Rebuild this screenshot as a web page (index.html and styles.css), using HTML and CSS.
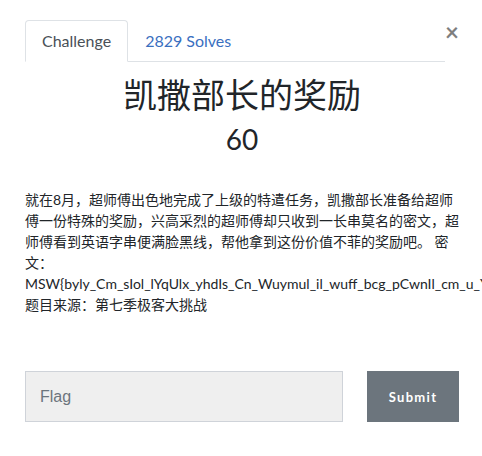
FILE: index.html
```html
<!DOCTYPE html>
<html lang="zh-CN">
<head>
  <meta charset="UTF-8">
  <meta name="viewport" content="width=device-width, initial-scale=1.0">
  <title>凯撒部长的奖励</title>
  <link rel="stylesheet" href="styles.css">
</head>
<body>
  <div class="modal-body">
    <div class="tabs-row">
      <ul class="nav-tabs">
        <li><a class="nav-link active" href="#challenge">Challenge</a></li>
        <li><a class="nav-link" href="#solves">2829 Solves</a></li>
      </ul>
      <button type="button" class="close" aria-label="Close">&times;</button>
    </div>

    <h2 class="challenge-name">凯撒部长的奖励</h2>
    <h3 class="challenge-value">60</h3>

    <p class="challenge-desc">就在8月，超师傅出色地完成了上级的特遣任务，凯撒部长准备给超师傅一份特殊的奖励，兴高采烈的超师傅却只收到一长串莫名的密文，超师傅看到英语字串便满脸黑线，帮他拿到这份价值不菲的奖励吧。 密文：MSW{byly_Cm_sIol_lYqUlx_yhdIs_Cn_Wuymul_il_wuff_bcg_pCwnIl_cm_u_Yrwyh_ypy}<br>题目来源：第七季极客大挑战</p>

    <form class="submit-row" onsubmit="return false;">
      <input type="text" class="flag-input" placeholder="Flag">
      <button type="submit" class="submit-btn">Submit</button>
    </form>
  </div>
</body>
</html>
```

FILE: styles.css
```css
html, body {
  overflow-x: hidden;
}
body {
  margin: 0;
  font-family: Lato, "Noto Sans CJK SC", sans-serif;
  color: #212529;
  background-color: #fff;
}
.modal-body {
  padding: 20px 23px 0 25px;
}
.tabs-row {
  display: flex;
  align-items: flex-start;
}
.nav-tabs {
  flex: 1;
  display: flex;
  list-style: none;
  margin: 0;
  padding: 0;
  border-bottom: 1px solid #dee2e6;
}
.nav-tabs li {
  margin-bottom: -1px;
}
.nav-link {
  display: block;
  padding: 8px 16px;
  font-size: 16px;
  line-height: 24px;
  color: #3a6fbf;
  text-decoration: none;
  border: 1px solid transparent;
  border-top-left-radius: 4px;
  border-top-right-radius: 4px;
}
.nav-link.active {
  color: #495057;
  background-color: #fff;
  border-color: #dee2e6 #dee2e6 #fff;
}
.close {
  width: 14px;
  padding: 0;
  margin: 0;
  border: none;
  background: none;
  font-family: Lato, sans-serif;
  font-size: 24px;
  font-weight: bold;
  line-height: 24px;
  color: #000;
  opacity: 0.5;
  cursor: pointer;
}
.challenge-name {
  margin: 13px 0 0;
  text-align: center;
  font-size: 34px;
  font-weight: normal;
  line-height: 1.2;
}
.challenge-value {
  margin: 7px 0 0;
  text-align: center;
  font-size: 28px;
  font-weight: normal;
  line-height: 1.2;
}
.challenge-desc {
  margin: 33px 0 0;
  font-size: 14px;
  line-height: 21px;
}
.submit-row {
  display: flex;
  gap: 24px;
  margin-top: 56px;
}
.flag-input {
  flex: 1;
  height: 51px;
  padding: 0 14px;
  font-family: "Liberation Sans", Arial, sans-serif;
  font-size: 16px;
  background-color: #efefef;
  border: 1px solid #cfd3d9;
  box-sizing: border-box;
}
.flag-input::placeholder {
  color: #6c757d;
}
.submit-btn {
  width: 92px;
  height: 51px;
  border: none;
  background-color: #6c757d;
  color: #fff;
  font-family: Lato, sans-serif;
  font-size: 13px;
  font-weight: bold;
  letter-spacing: 1.3px;
  cursor: pointer;
}
```
